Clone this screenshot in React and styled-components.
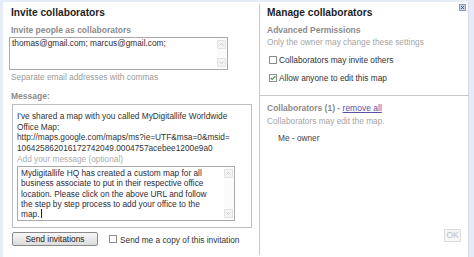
import React from "react";
import styled, { createGlobalStyle } from "styled-components";

const Global = createGlobalStyle`
  html, body { margin: 0; padding: 0; background: #e6ecf7; }
  * { box-sizing: border-box; }
`;

const Frame = styled.div`
  width: 474px;
  height: 257px;
  padding: 2px 0 0 3px;
  background: #e6ecf7;
  font-family: "Liberation Sans", Arial, sans-serif;
  display: flex;
`;

const Dialog = styled.div`
  position: relative;
  width: 466px;
  height: 255px;
  background: #fff;
  display: grid;
  grid-template-columns: 256px 210px;
  border-right: 1px solid #d3dcef;
`;

const LeftPane = styled.div`
  padding: 5px 0 0 8px;
  display: flex;
  flex-direction: column;
  align-items: flex-start;
`;

const RightPane = styled.div`
  margin: 2px 0 2px 0;
  border-left: 1px solid #c8c8c8;
  display: flex;
  flex-direction: column;
`;

const Title = styled.div`
  font-size: 10.2px;
  line-height: 12px;
  font-weight: bold;
  color: #1e1e1e;
`;

const Label = styled.div`
  font-size: 8.5px;
  line-height: 10.4px;
  font-weight: bold;
  color: #8c8c8c;
  margin-top: ${(p) => p.$mt || 0}px;
  white-space: nowrap;
`;

const Text = styled.div`
  font-size: 8.3px;
  line-height: 10.4px;
  color: ${(p) => p.$color || "#333"};
  margin-top: ${(p) => p.$mt || 0}px;
  margin-left: ${(p) => p.$ml || 0}px;
  white-space: pre;
`;

const Field = styled.div`
  display: flex;
  width: ${(p) => p.$w}px;
  height: ${(p) => p.$h}px;
  margin-top: ${(p) => p.$mt || 0}px;
  margin-left: ${(p) => p.$ml || 0}px;
  border: 1px solid #a9a9a9;
  background: #fff;
`;

const FieldText = styled.div`
  flex: 1;
  padding: ${(p) => p.$pad};
  font-size: 8.3px;
  line-height: 10.3px;
  color: #2f2a3a;
  white-space: pre;
  overflow: hidden;
`;

const Scrollbar = styled.div`
  width: 10px;
  display: flex;
  flex-direction: column;
  justify-content: space-between;
  padding: 2px 1px 2px 0;
  background: #fbfbfb;
`;

const Arrow = styled.div`
  width: 9px;
  height: 9px;
  border: 1px solid #e2e2e2;
  border-radius: 1px;
  background: #f3f3f3;
  display: flex;
  align-items: center;
  justify-content: center;
`;

const Caret = styled.span`
  display: inline-block;
  width: 1px;
  height: 9px;
  background: #222;
  vertical-align: -1px;
  margin-left: 2px;
`;

const MessageBox = styled.div`
  width: 240px;
  height: 124px;
  margin-top: 3px;
  margin-left: 1px;
  border: 1px solid #bdbdbd;
  padding: 6px 0 0 4px;
`;

const ButtonRow = styled.div`
  display: flex;
  align-items: center;
  margin-top: 4px;
  margin-left: 1px;
`;

const Button = styled.div`
  width: 86px;
  height: 14px;
  border: 1px solid #8a8a8a;
  border-radius: 2px;
  background: linear-gradient(#f7f7f7, #dcdcdc);
  font-size: 8.4px;
  line-height: 12px;
  text-align: center;
  color: #222;
`;

const Check = styled.span`
  width: 8px;
  height: 8px;
  border: 1px solid #8e8e8e;
  background: #fff;
  display: inline-flex;
  align-items: center;
  justify-content: center;
  flex: none;
  margin-left: ${(p) => p.$ml || 0}px;
`;

const CheckRow = styled.div`
  display: flex;
  align-items: center;
  margin-top: ${(p) => p.$mt || 0}px;
  margin-left: 2px;
  gap: 2px;
`;

const Section = styled.div`
  padding: 3px 0 0 7px;
  border-top: ${(p) => (p.$top ? "1px solid #c8c8c8" : "none")};
  margin-top: ${(p) => p.$mt || 0}px;
  display: flex;
  flex-direction: column;
  flex: ${(p) => (p.$grow ? 1 : "none")};
`;

const Link = styled.a`
  color: #5b4fa8;
  text-decoration: underline;
  font-weight: normal;
`;

const OkButton = styled.div`
  margin-top: auto;
  margin-bottom: 13px;
  margin-right: 8px;
  align-self: flex-end;
  width: 17px;
  height: 13px;
  border: 1px solid #dcdcdc;
  background: #f6f6f6;
  color: #bdbdbd;
  font-size: 8.4px;
  line-height: 11px;
  text-align: center;
`;

const Close = styled.svg`
  position: absolute;
  top: 2px;
  right: 2px;
`;

const Up = () => (
  <svg width="5" height="3" viewBox="0 0 5 3">
    <path d="M0.5 2.5 L2.5 0.5 L4.5 2.5" stroke="#c4c4c4" strokeWidth="0.9" fill="none" />
  </svg>
);
const Down = () => (
  <svg width="5" height="3" viewBox="0 0 5 3">
    <path d="M0.5 0.5 L2.5 2.5 L4.5 0.5" stroke="#c4c4c4" strokeWidth="0.9" fill="none" />
  </svg>
);

const Bar = () => (
  <Scrollbar>
    <Arrow><Up /></Arrow>
    <Arrow><Down /></Arrow>
  </Scrollbar>
);

export default function App() {
  return (
    <>
      <Global />
      <Frame>
        <Dialog>
          <LeftPane>
            <Title>Invite collaborators</Title>
            <Label $mt={6}>Invite people as collaborators</Label>
            <Field $w={219} $h={33} $mt={1.6} $ml={-2}>
              <FieldText $pad="0 0 0 2px">thomas@gmail.com; marcus@gmail.com;</FieldText>
              <Bar />
            </Field>
            <Text $color="#9a9a9a" $mt={2}>Separate email addresses with commas</Text>
            <Label $mt={8.6}>Message:</Label>
            <MessageBox>
              <Text $color="#333">
                {"I've shared a map with you called MyDigitallife Worldwide\nOffice Map:\nhttp://maps.google.com/maps/ms?ie=UTF&msa=0&msid=\n106425862016172742049.0004757acebee1200e9a0"}
              </Text>
              <Text $color="#ababab" $mt={1}>Add your message (optional)</Text>
              <Field $w={218} $h={55} $mt={2}>
                <FieldText $pad="0.5px 0 0 3px">
                  {"Mydigitallife HQ has created a custom map for all\nbusiness associate to put in their respective office\nlocation. Please click on the above URL and follow\nthe step by step process to add your office to the\nmap."}
                  <Caret />
                </FieldText>
                <Bar />
              </Field>
            </MessageBox>
            <ButtonRow>
              <Button>Send invitations</Button>
              <Check $ml={11} />
              <Text $ml={3} $mt={2}>Send me a copy of this invitation</Text>
            </ButtonRow>
          </LeftPane>
          <RightPane>
            <Section>
              <Title>Manage collaborators</Title>
              <Label $mt={6}>Advanced Permissions</Label>
              <Text $color="#a5a5a5" $mt={1.6}>Only the owner may change these settings</Text>
              <CheckRow $mt={7.8}>
                <Check />
                <Text>Collaborators may invite others</Text>
              </CheckRow>
              <CheckRow $mt={7.4}>
                <Check>
                  <svg width="7" height="6" viewBox="0 0 7 6">
                    <path d="M0.8 3 L2.6 4.8 L6.3 0.8" stroke="#2f8f2f" strokeWidth="1.3" fill="none" />
                  </svg>
                </Check>
                <Text>Allow anyone to edit this map</Text>
              </CheckRow>
            </Section>
            <Section $top $mt={11.6} $grow style={{ paddingTop: 7 }}>
              <Label>
                Collaborators (1) - <Link>remove all</Link>
              </Label>
              <Text $color="#a5a5a5" $mt={2.6}>Collaborators may edit the map.</Text>
              <Text $color="#444" $mt={7} $ml={11}>Me - owner</Text>
              <OkButton>OK</OkButton>
            </Section>
          </RightPane>
          <Close width="7" height="7" viewBox="0 0 7 7">
            <rect x="0.5" y="0.5" width="6" height="6" fill="#c9d1e6" stroke="#8d9bc2" strokeWidth="1" />
            <path d="M2 2 L5 5 M5 2 L2 5" stroke="#4f5f8f" strokeWidth="1" />
          </Close>
        </Dialog>
      </Frame>
    </>
  );
}
